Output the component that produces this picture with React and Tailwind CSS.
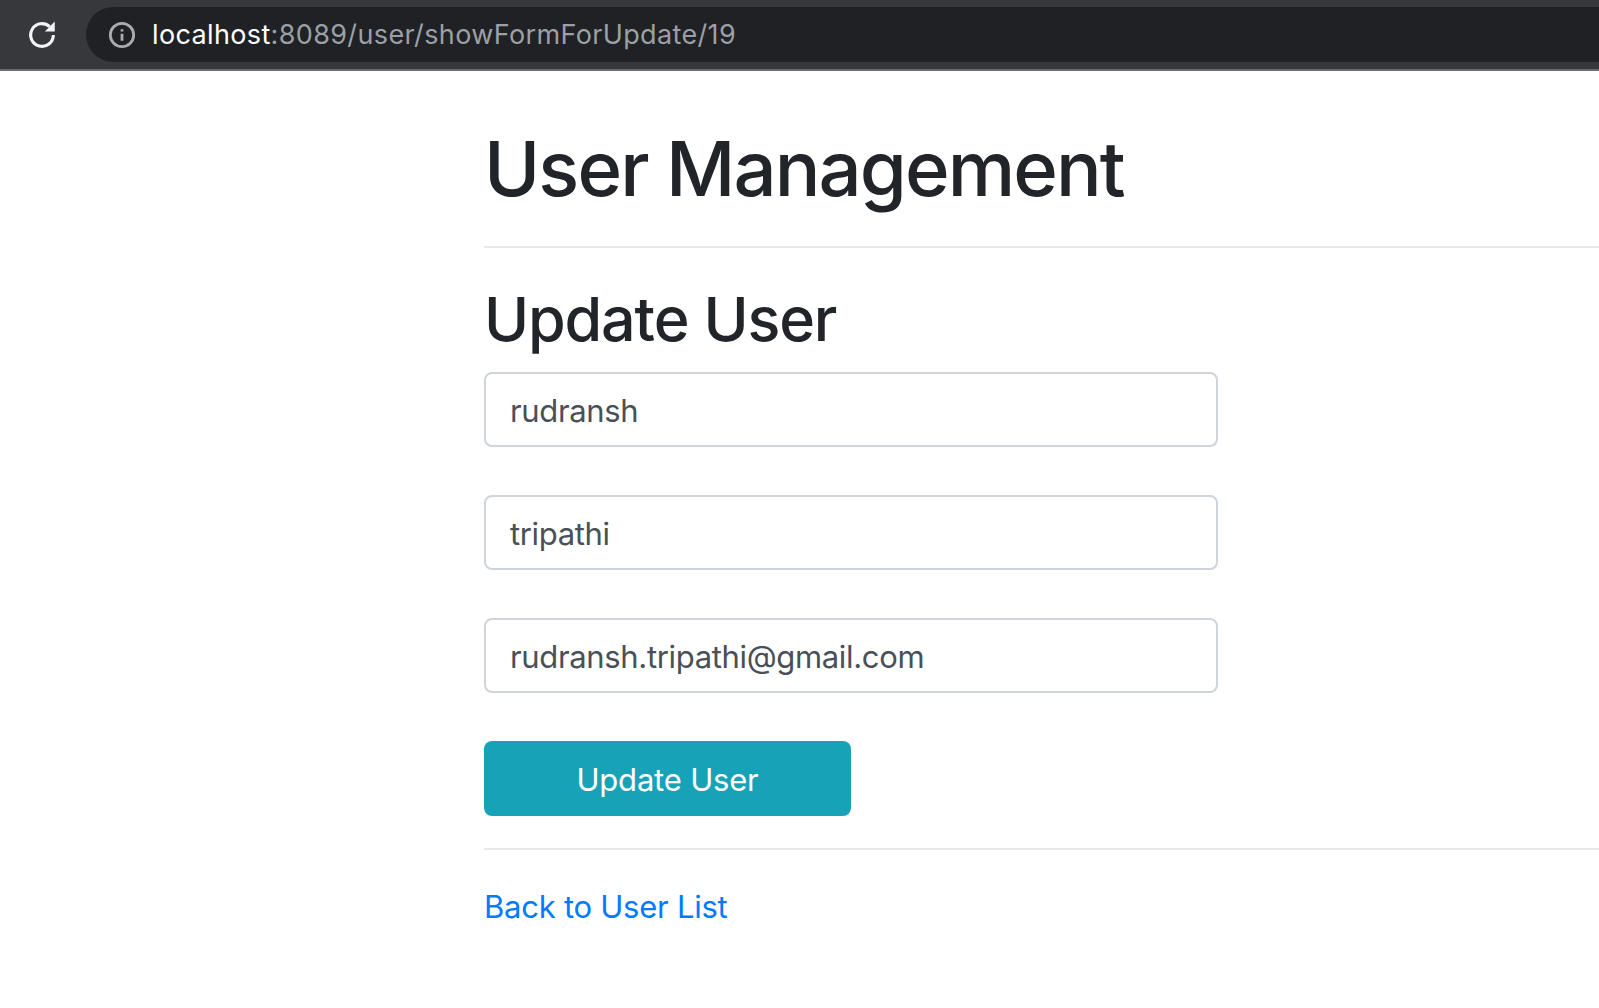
import { useState } from "react";

function Field({ value, onChange }) {
    return (
        <input
            type="text"
            value={value}
            onChange={ev => onChange(ev.target.value)}
            className="block w-[734px] h-[75px] mb-[48px] pl-[24px] pr-[24px] pt-[2px] bg-white border-2 border-[#ced4da] rounded-[8px] text-[31px] tracking-[-0.34px] text-[#495057] outline-none"
        />
    );
}

export default function App() {
    const [firstName, setFirstName] = useState("rudransh");
    const [lastName, setLastName] = useState("tripathi");
    const [email, setEmail] = useState("rudransh.tripathi@gmail.com");

    return (
        <div className="w-[1599px] h-[1008px] overflow-hidden bg-white font-['Inter','Liberation_Sans',sans-serif]">
            <div className="h-[71px] flex items-center bg-[#36383c] border-b-2 border-[#6b6d70]">
                <div className="w-[86px] pr-[3px] flex justify-center shrink-0">
                    <svg width="34" height="34" viewBox="0 0 24 24" fill="none" stroke="#f1f3f4" strokeWidth="2.2">
                        <path d="M20 12a8 8 0 1 1-2.6-5.9" />
                        <path d="M21 2.5V9.5H14Z" fill="#f1f3f4" stroke="none" />
                    </svg>
                </div>
                <div className="flex-1 h-[55px] flex items-center pl-[22px] bg-[#202124] rounded-l-full">
                    <svg width="28" height="28" viewBox="0 0 24 24" fill="none" stroke="#a8adb2" strokeWidth="2.4" className="shrink-0">
                        <circle cx="12" cy="12" r="10" />
                        <path d="M12 11v6M12 7v2" />
                    </svg>
                    <span className="ml-[16px] pt-[2px] text-[27px] tracking-[0.36px] text-[#9aa0a6]">
                        <span className="text-white">localhost</span>:8089/user/showFormForUpdate/19
                    </span>
                </div>
            </div>

            <div className="pl-[484px]">
                <h1 className="pt-[52px] text-[76px] leading-[91px] font-medium text-[#212529] tracking-[-1.9px]">User Management</h1>
                <hr className="mt-[32px] border-t-2 border-[#e7e8e9]" />
                <h2 className="mt-[35px] mb-[16px] text-[61px] leading-[73px] font-medium text-[#212529] tracking-[-1.15px]">Update User</h2>
                <form onSubmit={ev => ev.preventDefault()}>
                    <Field value={firstName} onChange={setFirstName} />
                    <Field value={lastName} onChange={setLastName} />
                    <Field value={email} onChange={setEmail} />
                    <button type="submit" className="block w-[367px] h-[75px] pt-[4px] bg-[#17a2b8] rounded-[8px] text-[31px] tracking-[-0.2px] text-white">
                        Update User
                    </button>
                </form>
                <hr className="mt-[32px] border-t-2 border-[#e7e8e9]" />
                <a href="#" className="block mt-[34px] text-[31px] leading-[46px] tracking-[-0.25px] text-[#007bff]">Back to User List</a>
            </div>
        </div>
    );
}
